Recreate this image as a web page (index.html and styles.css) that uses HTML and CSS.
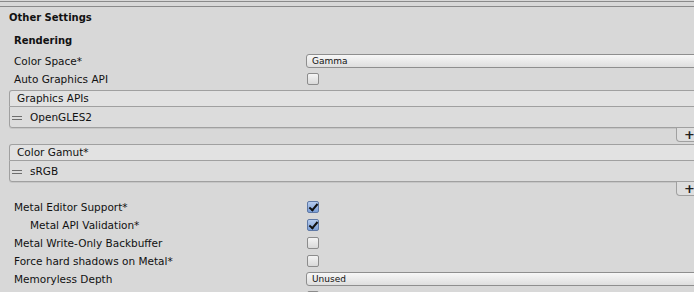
FILE: index.html
```html
<!DOCTYPE html>
<html lang="en">
<head>
  <meta charset="UTF-8">
  <meta name="viewport" content="width=device-width, initial-scale=1.0">
  <title>Player Settings</title>
  <link rel="stylesheet" href="styles.css">
</head>
<body>
  <div class="inspector">
    <div class="top-rule"></div>
    <div class="section-title">Other Settings</div>
    <div class="group-title">Rendering</div>

    <div class="rows">
      <div class="row">
        <span class="label">Color Space*</span>
        <div class="dropdown">Gamma</div>
      </div>
      <div class="row">
        <span class="label">Auto Graphics API</span>
        <span class="checkbox"></span>
      </div>
    </div>

    <div class="list">
      <div class="list-header">Graphics APIs</div>
      <div class="list-body">
        <div class="list-item"><span class="handle"></span>OpenGLES2</div>
      </div>
      <div class="list-footer"><span class="footer-btn">+</span></div>
    </div>

    <div class="list">
      <div class="list-header">Color Gamut*</div>
      <div class="list-body">
        <div class="list-item"><span class="handle"></span>sRGB</div>
      </div>
      <div class="list-footer"><span class="footer-btn">+</span></div>
    </div>

    <div class="rows">
      <div class="row">
        <span class="label">Metal Editor Support*</span>
        <span class="checkbox checked"></span>
      </div>
      <div class="row">
        <span class="label indent">Metal API Validation*</span>
        <span class="checkbox checked"></span>
      </div>
      <div class="row">
        <span class="label">Metal Write-Only Backbuffer</span>
        <span class="checkbox"></span>
      </div>
      <div class="row">
        <span class="label">Force hard shadows on Metal*</span>
        <span class="checkbox"></span>
      </div>
      <div class="row">
        <span class="label">Memoryless Depth</span>
        <div class="dropdown">Unused</div>
      </div>
      <div class="row">
        <span class="label"></span>
        <span class="checkbox"></span>
      </div>
    </div>
  </div>
</body>
</html>
```

FILE: styles.css
```css
body {
  margin: 0;
  background-color: #d8d8d8;
  overflow: hidden;
  font-family: 'DejaVu Sans', 'Liberation Sans', sans-serif;
  font-size: 10.5px;
  color: #111;
}
.inspector {
  width: 740px;
}
/* double line at the very top */
.top-rule {
  margin-top: 1px;
  height: 4px;
  border-top: 1px solid #8a8a8a;
  border-bottom: 1px solid #8a8a8a;
}
.section-title {
  height: 22px;
  line-height: 22px;
  padding-left: 9px;
  font-weight: bold;
  font-size: 10px;
}
.group-title {
  margin-top: 3px;
  height: 18px;
  line-height: 18px;
  padding-left: 14px;
  font-weight: bold;
  font-size: 10px;
}
.rows {
  margin-top: 2px;
}
.row {
  display: flex;
  align-items: center;
  height: 18px;
}
.label {
  width: 293px;
  padding-left: 14px;
  white-space: nowrap;
}
.label.indent {
  width: 277px;
  padding-left: 30px;
}
.dropdown {
  flex: 1;
  height: 12px;
  line-height: 12px;
  margin-left: -1px;
  padding-left: 5px;
  border: 1px solid #8e8e8e;
  border-radius: 3px;
  background: linear-gradient(#f7f7f7, #dedede);
  font-size: 9px;
}
.checkbox {
  width: 10px;
  height: 10px;
  margin-top: -1px;
  border: 1px solid #8c8c8c;
  border-radius: 2px;
  background: linear-gradient(#f4f4f4, #d9d9d9);
  position: relative;
}
.checkbox.checked {
  background: linear-gradient(#b5cbee, #7c9fd6);
  border-color: #5f79a6;
}
.checkbox.checked::after {
  content: '';
  position: absolute;
  left: 3px;
  top: 0px;
  width: 3px;
  height: 7px;
  border-right: 2px solid #111;
  border-bottom: 2px solid #111;
  transform: rotate(40deg);
}
.list {
  margin: 2px 4px 0 9px;
}
.list-header {
  height: 15px;
  line-height: 15px;
  padding-left: 7px;
  border: 1px solid #a0a0a0;
  border-bottom: none;
  border-radius: 3px 3px 0 0;
  background-color: #e2e2e2;
}
.list-body {
  border: 1px solid #a0a0a0;
  border-radius: 0 0 3px 3px;
  background-color: #dcdcdc;
  box-shadow: 0 1px 0 #c6c6c6;
}
.list-item {
  display: flex;
  align-items: center;
  height: 20px;
}
/* drag handle, two short lines */
.handle {
  width: 10px;
  height: 2px;
  margin: 2px 8px 0 2px;
  border-top: 1px solid #6d6d6d;
  border-bottom: 1px solid #6d6d6d;
}
.list-footer {
  display: flex;
  justify-content: flex-end;
  height: 14px;
}
.footer-btn {
  width: 51px;
  padding-left: 7px;
  border: 1px solid #a0a0a0;
  border-top: none;
  border-radius: 0 0 3px 4px;
  background-color: #dedede;
  font-size: 13px;
  font-weight: bold;
  line-height: 13px;
  color: #222;
}
```
